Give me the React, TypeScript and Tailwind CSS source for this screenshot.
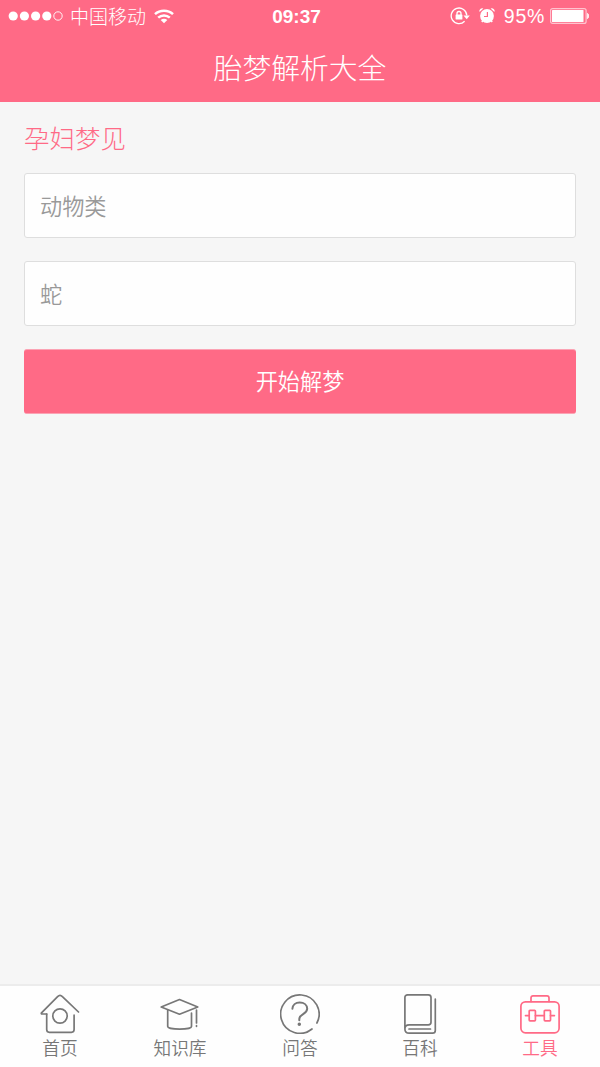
import { useState } from "react";
import type { ReactNode } from "react";

type Tab = {
  id: string;
  label: string;
  icon: ReactNode;
};

const TABS: Tab[] = [
  {
    id: "home",
    label: "首页",
    icon: (
      <>
        <path d="M6.700 20H2c-.7 0-.9-.6-.5-1.100L17.600 2.600c1.500-1.500 3.300-1.500 4.800 0L38.500 18" />
        <path d="M6.700 20v15.600c0 1.800 1 2.700 2.700 2.700h22c1.700 0 2.700-.9 2.700-2.700V21.200" />
        <circle cx="20" cy="22" r="7.200" />
      </>
    ),
  },
  {
    id: "knowledge",
    label: "知识库",
    icon: (
      <>
        <path d="M1.200 13 19.500 5.500 37.800 13l-18.300 7.200z" />
        <path d="M7.700 16v16.500c0 1.400 5 2.700 12 2.700s11.800-1.300 11.800-2.700V19" />
        <path d="M36.500 16v13M36.500 31.700v.6" />
      </>
    ),
  },
  {
    id: "qa",
    label: "问答",
    icon: (
      <>
        <path d="M32 35A19.200 19.200 0 1 1 36.900 29" />
        <path
          d="M12.400 14.800c.2-3.800 3.200-6.300 7.300-6.300 4.300 0 7.500 2.500 7.500 6.300 0 5.400-7.900 5.200-7.900 10.200v1.200"
          strokeWidth="2"
        />
        <circle cx="19.300" cy="30.200" r=".9" fill="currentColor" />
      </>
    ),
  },
  {
    id: "wiki",
    label: "百科",
    icon: (
      <>
        <path d="M4.900 34.300V3.500C4.900 1.800 5.900.9 7.600.9h20.700c1.700 0 2.700.9 2.700 2.600v24.700c0 1.700-1 2.600-2.700 2.600H9.200c-2.600 0-4.300 1.700-4.300 4.100s1.700 4.200 4.300 4.200h23.300c1.700 0 2.800-1 2.800-2.700V5" />
        <path d="M9 35h21.500" />
      </>
    ),
  },
  {
    id: "tools",
    label: "工具",
    icon: (
      <>
        <rect x=".9" y="7.800" width="38.200" height="31" rx="4.500" />
        <path d="M11 7.500V4c0-1.300.8-2.100 2-2.100h14c1.200 0 2 .8 2 2.100v3.500" />
        <rect x="9.200" y="16.300" width="6.200" height="10.500" rx=".8" />
        <rect x="24.300" y="16.300" width="6.200" height="10.500" rx=".8" />
        <path d="M5.500 21.600h3.500M15.400 21.600h8.900M30.500 21.600h3.900" />
      </>
    ),
  },
];

export default function App() {
  const [active, setActive] = useState("tools");

  return (
    <div className="flex h-screen flex-col bg-[#f6f6f6] font-['Liberation_Sans','Noto_Sans_CJK_SC',sans-serif] font-[350]">
      <header className="h-[102px] shrink-0 bg-[#ff6a86] text-white">
        <StatusBar />
        <h1 className="flex h-[70px] items-center justify-center pt-1 text-[28.800px] leading-none font-light">
          胎梦解析大全
        </h1>
      </header>

      <main className="flex flex-1 flex-col px-6">
        <h2 className="mt-[15px] h-[45px] text-[25.500px] leading-[44px] font-light text-[#ff6a86]">
          孕妇梦见
        </h2>
        <div className="mt-[11px] flex flex-col gap-[23px]">
          <Field value="动物类" />
          <Field value="蛇" />
          <button className="h-[65px] rounded-[3px] border-y border-[#fba3b4] bg-[#ff6a86] pt-1 text-[22.200px] leading-none text-white">
            开始解梦
          </button>
        </div>
      </main>

      <nav className="flex h-[83px] shrink-0 border-t-2 border-[#ececec] bg-[#fefefe]">
        {TABS.map((tab) => (
          <button
            key={tab.id}
            onClick={() => setActive(tab.id)}
            className={`flex flex-1 flex-col items-center pt-2 ${
              active === tab.id ? "text-[#ff6a86]" : "text-[#777]"
            }`}
          >
            <svg
              viewBox="0 0 40 40"
              className="size-10 shrink-0"
              fill="none"
              stroke="currentColor"
              strokeWidth="1.700"
              strokeLinecap="round"
              strokeLinejoin="round"
            >
              {tab.icon}
            </svg>
            <span className="mt-[3px] text-[17.700px] leading-6">{tab.label}</span>
          </button>
        ))}
      </nav>
    </div>
  );
}

function Field({ value }: { value: string }) {
  return (
    <div className="flex h-[65px] items-center rounded-[3px] border border-[#dedede] bg-[#fefefe] px-[15px] pt-[5px] text-[22.200px] leading-none text-[#999]">
      {value}
    </div>
  );
}

function StatusBar() {
  return (
    <div className="grid h-8 grid-cols-3 items-center pr-[11px] pl-2">
      <div className="flex items-center">
        {/* Signal strength */}
        <svg viewBox="0 0 56 12" className="h-3 w-14" fill="currentColor">
          <circle cx="5.200" cy="6" r="4.600" />
          <circle cx="16.400" cy="6" r="4.600" />
          <circle cx="27.600" cy="6" r="4.600" />
          <circle cx="38.800" cy="6" r="4.600" />
          <circle cx="50" cy="6" r="4.200" fill="none" stroke="currentColor" strokeWidth=".9" />
        </svg>
        <span className="ml-1.5 pt-0.5 text-[19px] leading-none font-light whitespace-nowrap">中国移动</span>
        <svg viewBox="0 0 20 15" className="ml-2 h-[15px] w-5" fill="none" stroke="currentColor" strokeWidth="2.500">
          <path d="M1 5.200c5-4.600 13-4.600 18 0" />
          <path d="M4.200 8.700c3.300-3 8.300-3 11.600 0" />
          <path d="M6.700 11c1.800-1.700 4.800-1.700 6.600 0L10 14.300z" fill="currentColor" stroke="none" />
        </svg>
      </div>

      <span className="pr-1 text-center text-[19px] leading-none font-bold">09:37</span>

      <div className="flex items-center justify-end">
        {/* Rotation lock */}
        <svg viewBox="0 0 20 18" className="h-[18px] w-5" fill="none" stroke="currentColor" strokeWidth="1.300">
          <path d="M14.600 14.300A7.800 7.800 0 1 1 16.800 8.500" />
          <path d="M13.500 8.500h6.300l-3.100 3.800z" fill="currentColor" stroke="none" />
          <path d="M7 8V6.500a2 2 0 0 1 4 0V8" />
          <rect x="5.600" y="7.500" width="6.800" height="5" rx=".6" fill="currentColor" stroke="none" />
        </svg>
        {/* Alarm */}
        <svg viewBox="0 0 18 18" className="ml-2 h-[18px] w-[18px]" fill="currentColor">
          <circle cx="9" cy="9" r="6.900" />
          <path d="M1.500 4.900a2.800 2.800 0 0 1 3.900-3.400zM16.500 4.900a2.800 2.800 0 0 0-3.900-3.400z" />
          <path d="m4.800 13.700-1 1.200M13.200 13.700l1 1.200" stroke="currentColor" strokeWidth="1.500" />
          <path d="M9.400 5v4.500H6" fill="none" stroke="#ff6a86" strokeWidth="1.200" />
        </svg>
        <span className="ml-2 pt-0.5 text-[19.500px] leading-none tracking-[.7px]">95%</span>
        {/* Battery */}
        <svg viewBox="0 0 39 16" className="ml-[5px] h-4 w-[39px]">
          <rect x=".6" y=".6" width="35.500" height="14.800" rx="2" fill="none" stroke="#ffc3cf" strokeWidth="1.200" />
          <rect x="2" y="2" width="31.500" height="12" rx=".6" fill="#fff" />
          <path d="M37.300 5.300c2 .6 2 4.800 0 5.400z" fill="#fff" stroke="#fff" strokeWidth=".6" />
        </svg>
      </div>
    </div>
  );
}
